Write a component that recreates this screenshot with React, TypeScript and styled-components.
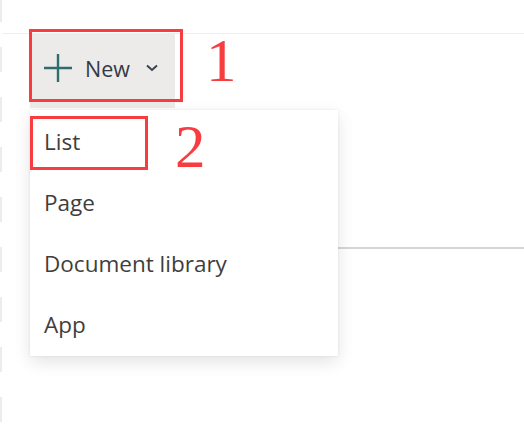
import React from "react";
import styled, { createGlobalStyle } from "styled-components";

const Global = createGlobalStyle`
  html, body { margin: 0; padding: 0; background: #ffffff; }
  body { font-family: "Open Sans", "Noto Sans", sans-serif; }
`;

const Page = styled.div`
  display: flex;
  width: 524px;
  height: 436px;
  overflow: hidden;
  background: #ffffff;
`;

const Rail = styled.div`
  width: 2px;
  flex: none;
  background: repeating-linear-gradient(
    to bottom,
    #ececec 0px,
    #ececec 22px,
    transparent 22px,
    transparent 47px,
    #ececec 47px,
    #ececec 50px
  );
`;

const Main = styled.div`
  flex: 1;
  position: relative;
  padding-top: 33px;
`;

const Toolbar = styled.div`
  display: flex;
  align-items: flex-start;
  border-top: 1px solid #eeeeee;
  padding-left: 28px;
`;

const NewButton = styled.div`
  position: relative;
  display: flex;
  align-items: center;
  width: 145px;
  height: 74px;
  box-sizing: border-box;
  padding: 0 0 6px 13px;
  background: #edebe9;
  color: #323a45;
  font-size: 21.5px;
`;

const Label = styled.span`
  margin-left: 12px;
  margin-right: 16px;
`;

const Highlight = styled.div<{ $l: number; $t: number; $w: number; $h: number }>`
  position: absolute;
  left: ${(p) => p.$l}px;
  top: ${(p) => p.$t}px;
  width: ${(p) => p.$w}px;
  height: ${(p) => p.$h}px;
  box-sizing: border-box;
  border: 3px solid #f73d3f;
  pointer-events: none;
`;

const Callout = styled.div`
  font-family: "Liberation Serif", serif;
  font-size: 61px;
  line-height: 61px;
  color: #f73d3f;
`;

const ToolbarCallout = styled(Callout)`
  margin-left: 31px;
  margin-top: -4px;
`;

const ItemCallout = styled(Callout)`
  position: absolute;
  left: 145px;
  top: 5px;
`;

const Menu = styled.div`
  position: absolute;
  left: 28px;
  top: 110px;
  width: 308px;
  padding: 1px 0;
  background: #ffffff;
  box-shadow: 0 6px 16px rgba(0, 0, 0, 0.11), 0 0 3px rgba(0, 0, 0, 0.07);
  z-index: 2;
`;

const MenuItem = styled.div`
  position: relative;
  display: flex;
  align-items: center;
  height: 61px;
  padding-left: 14px;
  font-size: 22.5px;
  color: #3f3e3d;
`;

const Content = styled.div`
  margin: 139px 0 0 120px;
  border-top: 2px solid #d6d6d6;
`;

const Plus = () => (
  <svg width="30" height="30" viewBox="0 0 30 30" fill="none">
    <path d="M15 1V29M1 15H29" stroke="#2f6c6c" strokeWidth="2.4" />
  </svg>
);

const Chevron = () => (
  <svg width="12" height="8" viewBox="0 0 12 8" fill="none">
    <path d="M1 1.5L6 6L11 1.5" stroke="#3a4250" strokeWidth="2" />
  </svg>
);

export default function App() {
  return (
    <>
      <Global />
      <Page>
        <Rail />
        <Main>
          <Toolbar>
            <NewButton>
              <Plus />
              <Label>New</Label>
              <Chevron />
              <Highlight $l={-1} $t={-5} $w={154} $h={73} />
            </NewButton>
            <ToolbarCallout>1</ToolbarCallout>
          </Toolbar>
          <Menu>
            <MenuItem>
              List
              <Highlight $l={0} $t={5} $w={118} $h={54} />
              <ItemCallout>2</ItemCallout>
            </MenuItem>
            <MenuItem>Page</MenuItem>
            <MenuItem>Document library</MenuItem>
            <MenuItem>App</MenuItem>
          </Menu>
          <Content />
        </Main>
      </Page>
    </>
  );
}
